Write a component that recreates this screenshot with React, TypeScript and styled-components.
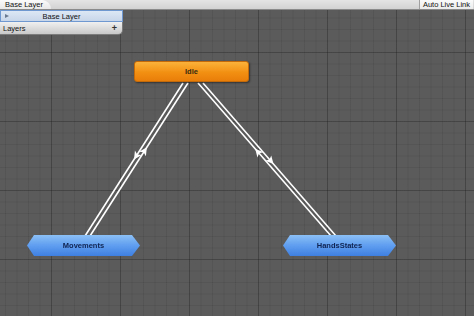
import React from "react";
import styled, { createGlobalStyle } from "styled-components";

const Global = createGlobalStyle`
  html, body { margin: 0; padding: 0; }
  body { width: 474px; height: 316px; overflow: hidden; font-family: "Liberation Sans", Arial, sans-serif; }
`;

const Root = styled.div`
  position: relative;
  width: 474px;
  height: 316px;
  overflow: hidden;
  background-color: #5b5b5b;
  background-image:
    linear-gradient(to right, rgba(35,35,35,0.32) 1px, transparent 1px),
    linear-gradient(to bottom, rgba(35,35,35,0.32) 1px, transparent 1px),
    linear-gradient(to right, rgba(40,40,40,0.12) 1px, transparent 1px),
    linear-gradient(to bottom, rgba(40,40,40,0.12) 1px, transparent 1px);
  background-size: 69px 69px, 69px 69px, 11.5px 11.5px, 11.5px 11.5px;
  background-position: 51px 52px, 51px 52px, 5px 6px, 5px 6px;
  display: flex;
  flex-direction: column;
`;

const TopBar = styled.div`
  height: 9px;
  display: flex;
  align-items: stretch;
  justify-content: space-between;
  background: linear-gradient(#e4e4e4, #d2d2d2);
  border-bottom: 1px solid #8a8a8a;
  font-size: 7.5px;
  color: #111;
  position: relative;
  z-index: 2;
`;

const Crumb = styled.div`
  width: 46px;
  padding-left: 5px;
  background: linear-gradient(#fbfbfb, #e8e8e8);
  border-top-right-radius: 10px 10px;
  display: flex;
  align-items: center;
  line-height: 9px;
`;

const LiveLink = styled.div`
  padding: 0 3px;
  margin-right: 1px;
  background: linear-gradient(#fbfbfb, #ebebeb);
  border-left: 1px solid #a0a0a0;
  display: flex;
  align-items: center;
  line-height: 9px;
`;

const Panel = styled.div`
  width: 123px;
  display: flex;
  flex-direction: column;
  position: relative;
  z-index: 2;
  font-size: 7.5px;
  color: #111;
`;

const LayerRow = styled.div<{ $selected?: boolean }>`
  box-sizing: border-box;
  display: flex;
  align-items: center;
  position: relative;
  padding: 0 3px;
  ${(p) =>
    p.$selected
      ? `
    height: 12px;
    background: linear-gradient(#dde7f4, #c8d6ea);
    border: 1px solid #7098d0;
    justify-content: center;
  `
      : `
    height: 13px;
    background: linear-gradient(#f0f0f0, #c9c9c9);
    border-bottom: 1px solid #7c7c7c;
    border-right: 1px solid #7c7c7c;
    border-bottom-right-radius: 5px;
    justify-content: space-between;
  `}
`;

const Tri = styled.span`
  position: absolute;
  left: 4px;
  top: 3px;
  width: 0;
  height: 0;
  border-top: 2.5px solid transparent;
  border-bottom: 2.5px solid transparent;
  border-left: 4px solid #6b7a90;
`;

const Plus = styled.span`
  font-weight: bold;
  font-size: 9px;
  color: #333;
  margin-right: 2px;
`;

const Canvas = styled.div`
  position: absolute;
  inset: 0;
`;

const Wires = styled.svg`
  position: absolute;
  left: 0;
  top: 0;
`;

const StateNode = styled.div<{ $x: number; $y: number }>`
  position: absolute;
  left: ${(p) => p.$x}px;
  top: ${(p) => p.$y}px;
  width: 115px;
  height: 21px;
  box-sizing: border-box;
  border-radius: 3px;
  background: linear-gradient(#fbb23a, #f29012 55%, #e97d08);
  border: 1px solid #c46a08;
  box-shadow: 1px 1px 2px rgba(0,0,0,0.45);
  display: flex;
  align-items: center;
  justify-content: center;
  font-size: 7.5px;
  font-weight: bold;
  color: #3a2a10;
`;

const Hex = styled.div<{ $x: number; $y: number }>`
  position: absolute;
  left: ${(p) => p.$x}px;
  top: ${(p) => p.$y}px;
  width: 113px;
  height: 21px;
  clip-path: polygon(7px 0, calc(100% - 8px) 0, 100% 50%, calc(100% - 8px) 100%, 7px 100%, 0 50%);
  background: linear-gradient(#8cc0f6, #5f9ef0 50%, #3f7fe0);
  display: flex;
  align-items: center;
  justify-content: center;
  font-size: 7.5px;
  font-weight: bold;
  color: #0f2350;
  filter: drop-shadow(1px 1px 1px rgba(0,0,0,0.4));
`;

function Arrow({ x, y, angle }: { x: number; y: number; angle: number }) {
  return (
    <polygon
      points="0,0 -8,-4 -6,0 -8,4"
      fill="#fff"
      transform={`translate(${x} ${y}) rotate(${angle})`}
    />
  );
}

export default function App() {
  const la = { x1: 183, y1: 83, x2: 85, y2: 236 };
  const lb = { x1: 188, y1: 83, x2: 90, y2: 236 };
  const ra = { x1: 198, y1: 83, x2: 331, y2: 236 };
  const rb = { x1: 203, y1: 83, x2: 336, y2: 236 };
  const angL = (Math.atan2(la.y2 - la.y1, la.x2 - la.x1) * 180) / Math.PI;
  const angR = (Math.atan2(ra.y2 - ra.y1, ra.x2 - ra.x1) * 180) / Math.PI;
  const pt = (l: typeof la, t: number) => ({ x: l.x1 + (l.x2 - l.x1) * t, y: l.y1 + (l.y2 - l.y1) * t });
  const lines = [la, lb, ra, rb];
  const a = pt(la, 0.5);
  const b = pt(lb, 0.42);
  const c = pt(ra, 0.43);
  const d = pt(rb, 0.53);
  return (
    <>
      <Global />
      <Root>
        <Canvas>
          <Wires width={474} height={316}>
            {lines.map((l, i) => (
              <line key={i} x1={l.x1} y1={l.y1} x2={l.x2} y2={l.y2} stroke="#fff" strokeWidth={1.6} />
            ))}
            <Arrow x={a.x} y={a.y} angle={angL} />
            <Arrow x={b.x} y={b.y} angle={angL + 180} />
            <Arrow x={c.x} y={c.y} angle={angR + 180} />
            <Arrow x={d.x} y={d.y} angle={angR} />
          </Wires>
          <StateNode $x={134} $y={61}>Idle</StateNode>
          <Hex $x={27} $y={235}>Movements</Hex>
          <Hex $x={283} $y={235}>HandsStates</Hex>
        </Canvas>
        <TopBar>
          <Crumb>Base Layer</Crumb>
          <LiveLink>Auto Live Link</LiveLink>
        </TopBar>
        <Panel>
          <LayerRow $selected>
            <Tri />
            Base Layer
          </LayerRow>
          <LayerRow>
            <span>Layers</span>
            <Plus>+</Plus>
          </LayerRow>
        </Panel>
      </Root>
    </>
  );
}
